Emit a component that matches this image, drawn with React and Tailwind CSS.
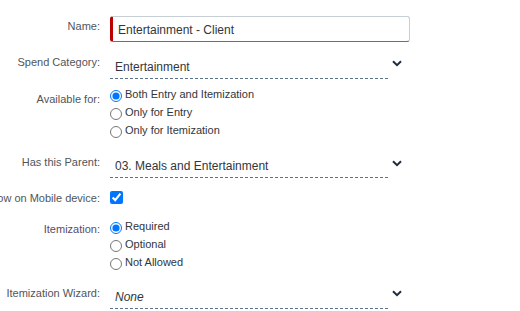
import { useState } from 'react'

function Label({ children, className = '' }) {
  return (
    <div
      className={`flex w-[100px] shrink-0 justify-end whitespace-nowrap text-[11px] leading-[13px] text-[#51555a] ${className}`}
    >
      {children}
    </div>
  )
}

function Chevron({ className = 'mt-[8px]' }) {
  return (
    <svg width="10" height="7" viewBox="0 0 10 7" className={`ml-[2px] shrink-0 ${className}`}>
      <path d="M1 1.2 L5 5.2 L9 1.2" fill="none" stroke="#1d2d3e" strokeWidth="2" />
    </svg>
  )
}

function Dropdown({ label, value, italic = false, labelPt = 'pt-[4px]', chevronMt = 'mt-[8px]' }) {
  return (
    <div className="flex h-[27px]">
      <Label className={labelPt}>{label}</Label>
      <div className="ml-[10px] flex">
        <div className="flex w-[280px] flex-col">
          <div
            className={`pl-[5px] pt-[8px] text-[12px] leading-[14px] text-[#32363a] ${italic ? 'italic' : ''}`}
          >
            {value}
          </div>
          {/* dashed underline */}
          <div className="mt-auto h-px w-full bg-[repeating-linear-gradient(to_right,#5b738b_0_3px,transparent_3px_5px)]" />
        </div>
        <Chevron className={chevronMt} />
      </div>
    </div>
  )
}

function RadioGroup({ label, name, options, labelPt = 'pt-[4px]' }) {
  const [picked, setPicked] = useState(options[0])

  return (
    <div className="flex">
      <Label className={labelPt}>{label}</Label>
      <div className="ml-[10px] flex flex-col">
        {options.map((opt) => (
          <label key={opt} className="flex h-[18px] items-start">
            <input
              type="radio"
              name={name}
              checked={picked === opt}
              onChange={() => setPicked(opt)}
              className="m-0 mt-[3px] h-[12px] w-[12px] shrink-0"
            />
            <span className="ml-[3px] pt-[1px] text-[11px] leading-[13px] text-[#32363a]">{opt}</span>
          </label>
        ))}
      </div>
    </div>
  )
}

export default function App() {
  const [name, setName] = useState('Entertainment - Client')
  const [mobile, setMobile] = useState(true)

  return (
    <div className="h-[311px] w-[520px] overflow-hidden bg-white pt-[16px] font-['Liberation_Sans',Arial,sans-serif]">
      {/* Name */}
      <div className="flex h-[26px]">
        <Label className="pt-[4px]">Name:</Label>
        <input
          value={name}
          onChange={(e) => setName(e.target.value)}
          className="ml-[10px] h-[26px] w-[300px] rounded-[3px] border border-[#c6ced6] border-b-[#5b738b] border-l-[3px] border-l-[#bb0000] bg-white pl-[5px] pt-[2px] text-[12px] leading-[14px] text-[#32363a] outline-none"
        />
      </div>

      <div className="mt-[10px]">
        <Dropdown label="Spend Category:" value="Entertainment" />
      </div>

      <div className="mt-[8px]">
        <RadioGroup
          label="Available for:"
          name="available"
          labelPt="pt-[6px]"
          options={['Both Entry and Itemization', 'Only for Entry', 'Only for Itemization']}
        />
      </div>

      <div className="mt-[10px]">
        <Dropdown
          label="Has this Parent:"
          value="03. Meals and Entertainment"
          labelPt="pt-[5px]"
          chevronMt="mt-[9px]"
        />
      </div>

      {/* Mobile */}
      <div className="mt-[13px] flex h-[13px] items-start">
        <Label className="pt-[1px]">Show on Mobile device:</Label>
        <input
          type="checkbox"
          checked={mobile}
          onChange={(e) => setMobile(e.target.checked)}
          className="m-0 ml-[10px] h-[13px] w-[13px]"
        />
      </div>

      <div className="mt-[15px]">
        <RadioGroup
          label={<span className="text-[#5a4a6a]">Itemization:</span>}
          name="itemization"
          options={['Required', 'Optional', 'Not Allowed']}
        />
      </div>

      <div className="mt-[9px]">
        <Dropdown label="Itemization Wizard:" value="None" italic labelPt="pt-[5px]" />
      </div>
    </div>
  )
}
